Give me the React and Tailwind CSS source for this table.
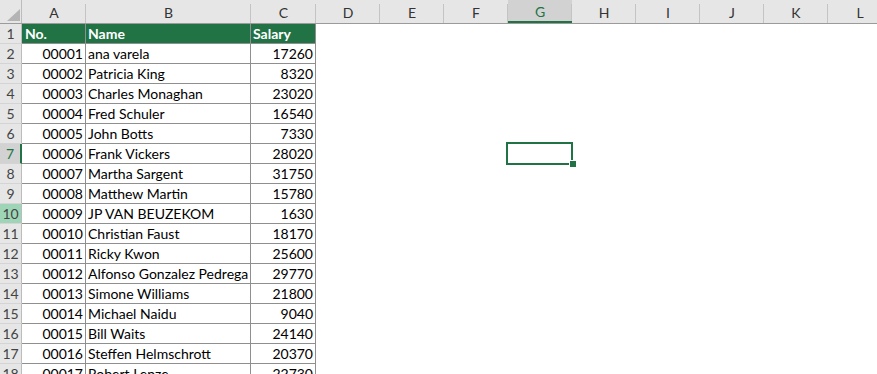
import React from "react";

const cols = [
  { k: "D", w: 64 },
  { k: "E", w: 64 },
  { k: "F", w: 64 },
  { k: "G", w: 64 },
  { k: "H", w: 64 },
  { k: "I", w: 64 },
  { k: "J", w: 64 },
  { k: "K", w: 64 },
  { k: "L", w: 64 },
];

const data = [
  ["00001", "ana varela", "17260"],
  ["00002", "Patricia King", "8320"],
  ["00003", "Charles Monaghan", "23020"],
  ["00004", "Fred Schuler", "16540"],
  ["00005", "John Botts", "7330"],
  ["00006", "Frank Vickers", "28020"],
  ["00007", "Martha Sargent", "31750"],
  ["00008", "Matthew Martin", "15780"],
  ["00009", "JP VAN BEUZEKOM", "1630"],
  ["00010", "Christian Faust", "18170"],
  ["00011", "Ricky Kwon", "25600"],
  ["00012", "Alfonso Gonzalez Pedrega", "29770"],
  ["00013", "Simone Williams", "21800"],
  ["00014", "Michael Naidu", "9040"],
  ["00015", "Bill Waits", "24140"],
  ["00016", "Steffen Helmschrott", "20370"],
  ["00017", "Robert Lenze", "22730"],
];

function RowHeader({ n }) {
  let cls = "bg-[#e6e6e6] border-r border-[#bcbcbc] text-[#444]";
  if (n === 7) cls = "bg-[#d2d2d2] border-r-2 border-[#217346] text-[#217346]";
  if (n === 10) cls = "bg-[#9fd5b7] border-r border-[#bcbcbc] text-[#444]";
  return (
    <div
      className={`w-[22px] shrink-0 h-full flex items-center justify-center border-b border-b-[#d4d4d4] ${cls}`}
    >
      {n}
    </div>
  );
}

export default function App() {
  const font = { fontFamily: "Lato, 'Liberation Sans', sans-serif" };
  return (
    <div
      className="relative w-[877px] h-[374px] overflow-hidden bg-white text-[14px] leading-none text-black"
      style={font}
    >
      {/* column header */}
      <div className="flex h-[24px] bg-[#e6e6e6] border-b border-[#9b9b9b]">
        <div className="w-[22px] shrink-0 relative border-r border-[#bcbcbc]">
          <svg className="absolute left-[7px] top-[9px]" width="13" height="12" viewBox="0 0 13 12">
            <polygon points="13,0 13,12 0,12" fill="#b4b4b4" />
          </svg>
        </div>
        {[
          { k: "A", w: 64 },
          { k: "B", w: 165 },
          { k: "C", w: 65 },
          ...cols,
        ].map((c) => (
          <div
            key={c.k}
            className={`shrink-0 h-full flex items-center justify-center relative ${
              c.k === "G"
                ? "bg-[#d2d2d2] text-[#217346] border-b-2 border-[#217346]"
                : "text-[#333]"
            }`}
            style={{ width: c.w }}
          >
            <span className="pt-[2px]">{c.k}</span>
            <div className="absolute right-0 top-[4px] bottom-0 w-px bg-[#c4c4c4]" />
          </div>
        ))}
      </div>

      {/* row 1 header row */}
      <div className="flex h-[20px]">
        <RowHeader n={1} />
        <div className="w-[64px] shrink-0 bg-[#217346] text-white font-bold flex items-center px-[3px] border-r border-b border-[#8f8f8f]">
          No.
        </div>
        <div className="w-[165px] shrink-0 bg-[#217346] text-white font-bold flex items-center px-[2px] border-r border-b border-[#8f8f8f]">
          Name
        </div>
        <div className="w-[65px] shrink-0 bg-[#217346] text-white font-bold flex items-center px-[2px] border-r border-b border-[#8f8f8f]">
          Salary
        </div>
      </div>

      {data.map((r, i) => (
        <div key={i} className="flex h-[20px]">
          <RowHeader n={i + 2} />
          <div className="w-[64px] shrink-0 flex items-center justify-end px-[2px] border-r border-b border-[#8f8f8f]">
            {r[0]}
          </div>
          <div className="w-[165px] shrink-0 flex items-center px-[2px] border-r border-b border-[#8f8f8f] overflow-hidden whitespace-nowrap">
            {r[1]}
          </div>
          <div className="w-[65px] shrink-0 flex items-center justify-end px-[2px] border-r border-b border-[#8f8f8f]">
            {r[2]}
          </div>
        </div>
      ))}

      {/* selected cell G7 */}
      <div className="absolute left-[506px] top-[142px] w-[67px] h-[23px] border-2 border-[#217346]" />
      <div className="absolute left-[569px] top-[160px] w-[6px] h-[6px] bg-[#217346] border border-white box-content" />
    </div>
  );
}
